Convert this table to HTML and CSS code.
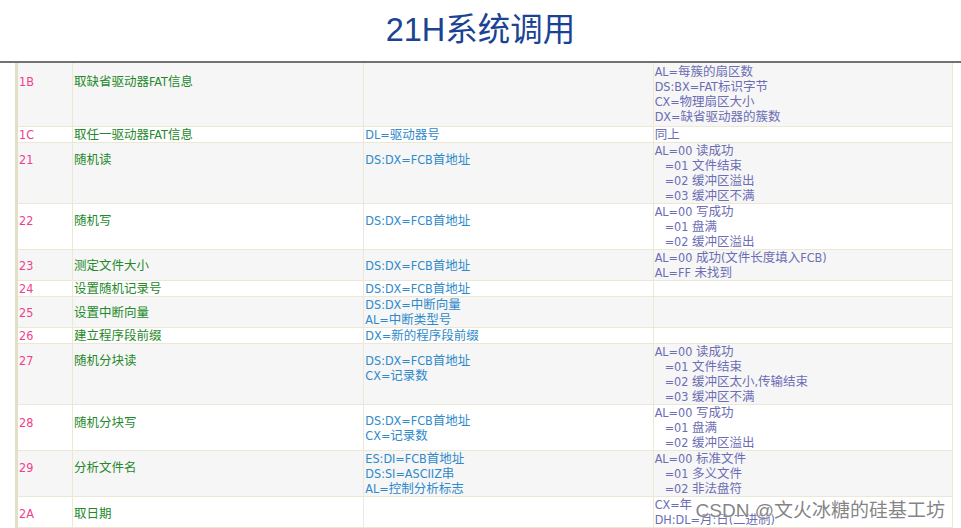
FILE: index.html
```html
<!DOCTYPE html>
<html lang="zh">
<head>
<meta charset="utf-8">
<title>21H系统调用</title>
<link rel="stylesheet" href="styles.css">
</head>
<body>
<header class="head">
  <h1 class="title">21H系统调用</h1>
</header>
<main class="wrap">
<table class="calls">
  <colgroup>
    <col class="c1"><col class="c2"><col class="c3"><col class="c4">
  </colgroup>
  <tbody>
    <tr class="alt first">
      <td class="no pt11">1B</td>
      <td class="fn pt11">取缺省驱动器FAT信息</td>
      <td class="in"></td>
      <td class="out">AL=每簇的扇区数<br>DS:BX=FAT标识字节<br>CX=物理扇区大小<br>DX=缺省驱动器的簇数</td>
    </tr>
    <tr>
      <td class="no">1C</td>
      <td class="fn">取任一驱动器FAT信息</td>
      <td class="in">DL=驱动器号</td>
      <td class="out">同上</td>
    </tr>
    <tr class="alt">
      <td class="no pt9">21</td>
      <td class="fn pt9">随机读</td>
      <td class="in pt9">DS:DX=FCB首地址</td>
      <td class="out">AL=00 读成功<br><span class="ind">=01 文件结束</span><br><span class="ind">=02 缓冲区溢出</span><br><span class="ind">=03 缓冲区不满</span></td>
    </tr>
    <tr>
      <td class="no pt9">22</td>
      <td class="fn pt9">随机写</td>
      <td class="in pt9">DS:DX=FCB首地址</td>
      <td class="out">AL=00 写成功<br><span class="ind">=01 盘满</span><br><span class="ind">=02 缓冲区溢出</span></td>
    </tr>
    <tr class="alt">
      <td class="no pt8">23</td>
      <td class="fn pt8">测定文件大小</td>
      <td class="in pt8">DS:DX=FCB首地址</td>
      <td class="out">AL=00 成功(文件长度填入FCB)<br>AL=FF 未找到</td>
    </tr>
    <tr>
      <td class="no">24</td>
      <td class="fn">设置随机记录号</td>
      <td class="in">DS:DX=FCB首地址</td>
      <td class="out"></td>
    </tr>
    <tr class="alt">
      <td class="no pt8">25</td>
      <td class="fn pt8">设置中断向量</td>
      <td class="in">DS:DX=中断向量<br>AL=中断类型号</td>
      <td class="out"></td>
    </tr>
    <tr>
      <td class="no">26</td>
      <td class="fn">建立程序段前缀</td>
      <td class="in">DX=新的程序段前缀</td>
      <td class="out"></td>
    </tr>
    <tr class="alt">
      <td class="no pt9">27</td>
      <td class="fn pt9">随机分块读</td>
      <td class="in pt9">DS:DX=FCB首地址<br>CX=记录数</td>
      <td class="out">AL=00 读成功<br><span class="ind">=01 文件结束</span><br><span class="ind">=02 缓冲区太小,传输结束</span><br><span class="ind">=03 缓冲区不满</span></td>
    </tr>
    <tr>
      <td class="no pt10">28</td>
      <td class="fn pt10">随机分块写</td>
      <td class="in pt8">DS:DX=FCB首地址<br>CX=记录数</td>
      <td class="out">AL=00 写成功<br><span class="ind">=01 盘满</span><br><span class="ind">=02 缓冲区溢出</span></td>
    </tr>
    <tr class="alt">
      <td class="no pt9">29</td>
      <td class="fn pt9">分析文件名</td>
      <td class="in">ES:DI=FCB首地址<br>DS:SI=ASCIIZ串<br>AL=控制分析标志</td>
      <td class="out">AL=00 标准文件<br><span class="ind">=01 多义文件</span><br><span class="ind">=02 非法盘符</span></td>
    </tr>
    <tr>
      <td class="no pt9">2A</td>
      <td class="fn pt9">取日期</td>
      <td class="in"></td>
      <td class="out">CX=年<br>DH:DL=月:日(二进制)</td>
    </tr>
  </tbody>
</table>
</main>
<div class="mark">CSDN @文火冰糖的硅基工坊</div>
</body>
</html>
```

FILE: styles.css
```css
html, body {
  margin: 0;
  padding: 0;
  background: #ffffff;
  overflow: hidden;
}
body {
  width: 961px;
  height: 528px;
  position: relative;
  font-family: "DejaVu Sans Condensed", "DejaVu Sans", "Noto Sans CJK SC", sans-serif;
}
.head {
  height: 61px;
  border-bottom: 2px solid #6e7378;
}
.title {
  margin: 0;
  padding-top: 12px;
  text-align: center;
  font-family: "Liberation Sans", "Noto Sans CJK SC", sans-serif;
  font-weight: normal;
  font-size: 32.5px;
  line-height: 36px;
  color: #1b4394;
}
.wrap {
  padding-left: 15px;
}
.calls {
  border-collapse: collapse;
  table-layout: fixed;
  width: 938px;
  border-left: 3px solid #e3dfc7;
  font-size: 12.5px;
  line-height: 15px;
}
.c1 { width: 56px; }
.c2 { width: 291px; }
.c3 { width: 289px; }
.c4 { width: 299px; }
.calls td {
  border: 1px solid #ece8d6;
  border-top: 0;
  padding: 0 1px;
  vertical-align: top;
  white-space: nowrap;
  overflow: hidden;
}
.calls tr { background: #ffffff; }
.calls tr.alt { background: #f6f6f6; }
.calls tr.first td { padding-top: 1px; padding-bottom: 2px; }
.no { color: #f23d8c; }
.fn { color: #23892a; }
.in { color: #2f8acb; }
.out { color: #6c6db5; }
.ind { padding-left: 10px; }
.pt8 { padding-top: 8px !important; }
.pt9 { padding-top: 9px !important; }
.pt10 { padding-top: 10px !important; }
.pt11 { padding-top: 11px !important; }
.mark {
  position: absolute;
  right: 16px;
  bottom: 6px;
  font-family: "Liberation Sans", "Noto Sans CJK SC", sans-serif;
  font-size: 19px;
  line-height: 22px;
  color: rgba(110, 110, 110, 0.85);
  text-shadow: 0 0 2px #ffffff, 0 0 1px #ffffff;
}
```
